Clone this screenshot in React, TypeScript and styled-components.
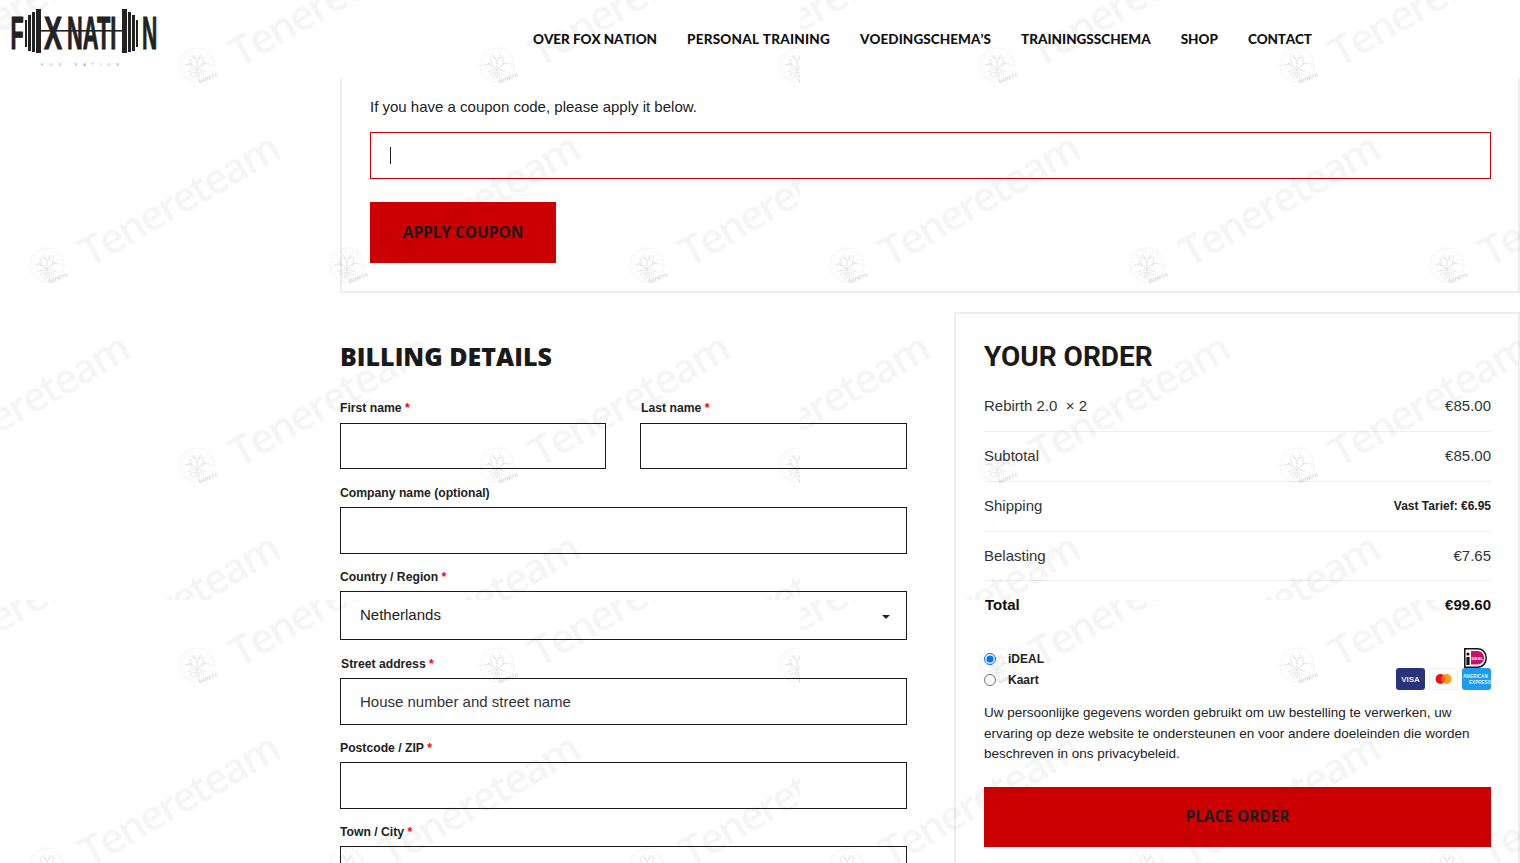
import React from 'react';
import styled, { createGlobalStyle } from 'styled-components';

const GlobalStyle = createGlobalStyle`
  html, body {
    margin: 0;
    padding: 0;
    background: #fff;
    overflow: hidden;
  }
  body {
    font-family: "Liberation Sans", Arial, sans-serif;
    color: #222;
  }
  * {
    box-sizing: border-box;
  }
`;

const Page = styled.div`
  position: relative;
  width: 1520px;
  height: 863px;
  overflow: hidden;
`;

const Header = styled.header`
  display: flex;
  height: 78px;
  align-items: flex-start;
`;

const LogoLink = styled.a`
  display: block;
  width: 533px;
  height: 78px;
  flex: none;
`;

const Nav = styled.nav`
  display: flex;
  gap: 30px;
  padding-top: 31px;
`;

const NavLink = styled.a<{ $track: number }>`
  font-family: Lato, "Open Sans", sans-serif;
  font-weight: 900;
  font-size: 13.5px;
  line-height: 17px;
  font-kerning: none;
  letter-spacing: ${(p) => p.$track}px;
  color: #111;
  text-transform: uppercase;
  white-space: nowrap;
`;

const Main = styled.main`
  padding-left: 340px;
`;

const CouponBox = styled.section`
  height: 215px;
  padding: 20px 27px 0 28px;
  border: 2px solid #eee;
  border-top: none;
`;

const CouponText = styled.p`
  margin: 0 0 16px;
  font-size: 15px;
  line-height: 18px;
  color: #222;
`;

const CouponField = styled.div`
  display: flex;
  align-items: center;
  height: 47px;
  padding-left: 19px;
  border: 1px solid #c00;
`;

const Caret = styled.span`
  display: block;
  width: 1px;
  height: 17px;
  background: #222;
`;

const RedButton = styled.button<{ $wide?: boolean; $tall?: number }>`
  display: block;
  width: ${(p) => (p.$wide ? '100%' : '186px')};
  height: ${(p) => p.$tall ?? 61}px;
  border: none;
  padding: 0 0 2px;
  background: #c00;
  color: #1c1c1c;
  font-family: "Open Sans", sans-serif;
  font-weight: 700;
  font-size: 15.4px;
  text-transform: uppercase;
`;

const CouponButton = styled(RedButton)`
  margin-top: 23px;
  padding: 0;
`;

const Checkout = styled.div`
  display: flex;
  gap: 47px;
  margin-top: 19px;
`;

const Billing = styled.section`
  width: 567px;
  flex: none;
  padding-top: 27px;
`;

const BillingTitle = styled.h3`
  margin: 0;
  font-family: "Open Sans", sans-serif;
  font-weight: 800;
  font-size: 25px;
  line-height: 34px;
  color: #1a1a1a;
  text-transform: uppercase;
`;

const OrderTitle = styled.h3`
  margin: 0;
  font-family: Roboto, sans-serif;
  font-weight: 700;
  font-size: 28px;
  line-height: 34px;
  color: #1a1a1a;
  text-transform: uppercase;
`;

const NameRow = styled.div`
  display: grid;
  grid-template-columns: 266px 267px;
  column-gap: 34px;
  margin-top: 26px;
`;

const Field = styled.div<{ $top?: number }>`
  margin-top: ${(p) => p.$top ?? 14}px;
`;

const Label = styled.label<{ $indent?: number; $gap?: number }>`
  display: block;
  height: 16px;
  margin-left: ${(p) => p.$indent ?? 0}px;
  margin-bottom: ${(p) => p.$gap ?? 7}px;
  font-size: 12.2px;
  line-height: 18px;
  font-weight: 700;
  color: #222;
`;

const Required = styled.span`
  color: #f00;
`;

const TextInput = styled.input<{ $h?: number }>`
  display: block;
  width: 100%;
  height: ${(p) => p.$h ?? 47}px;
  padding: 0 19px;
  border: 1px solid #1a1a1a;
  border-radius: 0;
  background: transparent;
  font-family: "Liberation Sans", Arial, sans-serif;
  font-size: 15px;
  color: #222;
  outline: none;
  &::placeholder {
    color: #333;
    opacity: 1;
  }
`;

const SelectBox = styled.div`
  display: flex;
  align-items: center;
  justify-content: space-between;
  height: 49px;
  padding: 0 16px 2px 19px;
  border: 1px solid #1a1a1a;
  font-size: 15px;
  color: #222;
`;

const SelectArrow = styled.span`
  display: block;
  width: 0;
  height: 0;
  margin-top: 4px;
  border-left: 4px solid transparent;
  border-right: 4px solid transparent;
  border-top: 4px solid #222;
`;

const OrderBox = styled.aside`
  flex: 1;
  height: 600px;
  padding: 26px 27px 0 28px;
  border: 2px solid #eee;
  border-bottom: none;
`;

const OrderRows = styled.div`
  margin-top: 8px;
`;

const OrderRow = styled.div<{ $h?: number; $last?: boolean }>`
  display: flex;
  align-items: center;
  justify-content: space-between;
  height: ${(p) => p.$h ?? 50}px;
  padding-bottom: 2px;
  border-bottom: ${(p) => (p.$last ? 'none' : '1px solid #eee')};
  font-size: 15px;
  color: #333;
`;

const SmallStrong = styled.strong`
  font-size: 12px;
  color: #222;
`;

const TotalCell = styled.strong`
  color: #111;
  font-size: 15px;
  &:first-child {
    margin-left: 1px;
  }
`;

const Payments = styled.div`
  position: relative;
  margin-top: 19px;
`;

const PayOption = styled.label`
  display: flex;
  align-items: center;
  height: 21px;
  font-size: 12px;
  font-weight: 700;
  color: #222;
`;

const Radio = styled.input`
  width: 12px;
  height: 12px;
  margin: 0 12px 0 0;
`;

const PayIcons = styled.div`
  position: absolute;
  right: 0;
  top: 0;
  display: flex;
  flex-direction: column;
  align-items: flex-end;
`;

const IdealWrap = styled.div`
  height: 20px;
  margin-right: 4px;
`;

const CardRow = styled.div`
  display: flex;
  gap: 4px;
`;

const PrivacyText = styled.p`
  margin: 13px 0 0;
  font-size: 13.5px;
  line-height: 20.5px;
  color: #222;
`;

const PlaceOrder = styled(RedButton)`
  margin-top: 22.5px;
`;

const Overlay = styled.svg`
  position: absolute;
  left: 0;
  top: 0;
  pointer-events: none;
`;

const logoPlates = [
  [25, 2, 20, 27],
  [28, 3, 15, 36],
  [32, 3, 12, 40],
  [36, 5, 9, 44],
  [122, 5, 9, 44],
  [128, 3, 12, 40],
  [132, 3, 15, 36],
  [136, 2, 20, 27],
];

// condensed letters: x position and horizontal squeeze of each run
const logoLetters: [string, number, number][] = [
  ['F', 10.5, 0.47],
  ['X', 44, 0.59],
  ['NATI', 67, 0.475],
  ['N', 142, 0.46],
];

const Logo = () => (
  <svg width="170" height="78" viewBox="0 0 170 78" aria-label="Fox Nation">
    <g fill="#222" stroke="#222" strokeWidth="1" fontFamily="Liberation Sans, Arial, sans-serif" fontWeight="700" fontSize="46">
      {logoLetters.map(([t, x, s]) => (
        <text key={t} transform={`translate(${x} 49) scale(${s} 1)`}>{t}</text>
      ))}
    </g>
    <rect x="41" y="30" width="81" height="1.6" fill="#222" />
    {logoPlates.map(([x, w, y, h]) => (
      <rect key={x} x={x} y={y} width={w} height={h} fill="#222" />
    ))}
    <text x="41" y="66" fontFamily="Liberation Sans, Arial, sans-serif" fontSize="4" fill="#999" letterSpacing="6">
      FOX NATION
    </text>
  </svg>
);

const IdealIcon = () => (
  <svg width="23" height="20" viewBox="0 0 23 20" style={{ display: 'block' }}>
    <path d="M.8.8h12.500c5.700 0 8.900 4 8.900 9.200s-3.200 9.200-8.900 9.200H.8z" fill="#fff" stroke="#111" strokeWidth="1.500" />
    <rect x="2.400" y="9" width="3.200" height="8" fill="#111" />
    <circle cx="4" cy="6" r="1.600" fill="#111" />
    <path d="M7 3h6.500c3.800 0 6.500 3 6.500 6.800s-2.700 6.700-6.500 6.700H7z" fill="#cc0f6e" />
    <text x="7.500" y="11.500" fontSize="4.300" fontWeight="700" fill="#fff" fontFamily="Liberation Sans, sans-serif">DEAL</text>
  </svg>
);

const VisaIcon = () => (
  <svg width="29" height="22" viewBox="0 0 29 22">
    <rect width="29" height="22" rx="3" fill="#27337a" />
    <text x="14.500" y="14" textAnchor="middle" fontSize="8" fontWeight="700" fill="#e8e8ee" fontFamily="Liberation Sans, sans-serif">VISA</text>
  </svg>
);

const MasterIcon = () => (
  <svg width="29" height="22" viewBox="0 0 29 22">
    <rect x="0.500" y="0.500" width="28" height="21" rx="3" fill="#fff" stroke="#eee" />
    <circle cx="11.500" cy="11" r="5" fill="#e8141f" />
    <circle cx="17.500" cy="11" r="5" fill="#f79e1b" />
    <path d="M14.500 7a5 5 0 0 1 0 8 5 5 0 0 1 0-8z" fill="#f2601a" />
  </svg>
);

const AmexIcon = () => (
  <svg width="29" height="22" viewBox="0 0 29 22">
    <rect width="29" height="22" rx="3" fill="#1f9bed" />
    <g fontFamily="Liberation Sans, sans-serif" fontWeight="700" fontSize="4.600" fill="#dff1fc">
      <text x="1" y="9.500">AMERICAN</text>
      <text x="7" y="15.500">EXPRESS</text>
    </g>
  </svg>
);

// one faint stamp of the trial watermark: tree seal plus the rotated word
const Stamp = ({ x, y }: { x: number; y: number }) => (
  <g transform={`translate(${x} ${y})`}>
    <use href="#seal" />
    <text
      x="43"
      y="3"
      transform="rotate(-30 43 3)"
      fontFamily="Open Sans, sans-serif"
      fontWeight="600"
      fontSize="41"
      fill="#000"
      fillOpacity="0.038"
      textLength="224"
    >
      Tenereteam
    </text>
  </g>
);

const Watermark = () => (
  <Overlay width="1520" height="863">
    <defs>
      <g id="seal" fill="none" stroke="#000" strokeOpacity="0.11">
        <circle r="17" strokeWidth="1" strokeDasharray="1 1.500" />
        <circle r="14.500" strokeWidth="0.600" strokeDasharray="1 1.500" />
        <path
          d="M0 13V-3M-3 13l2-8M3 13l-2-8M0 4l-9-6M-5 1l-2-8M-6-1l-6 1M0 4l9-7M5 0l2-8M6-2l6 1M0-3l-4-8M0-3l4-8M-9 7l7-3M9 7l-7-3M-2-6l-4-3M2-6l4-3M-7 10l4-3M7 10l-4-3"
          strokeWidth="1.300"
          strokeDasharray="1.500 .8"
        />
        <text
          x="3"
          y="16"
          transform="rotate(-22 10 19)"
          fontSize="7"
          fontWeight="700"
          fontFamily="Liberation Sans, sans-serif"
          fill="#000"
          fillOpacity="0.13"
          stroke="none"
        >
          tenere
        </text>
      </g>
      <pattern id="wm" patternUnits="userSpaceOnUse" width="800" height="600">
        {[65, 465].map((y) =>
          [-103, 197, 497, 797].map((x) => <Stamp key={`${x}-${y}`} x={x} y={y} />)
        )}
        {[265, 665].map((y) =>
          [47, 347, 647].map((x) => <Stamp key={`${x}-${y}`} x={x} y={y} />)
        )}
      </pattern>
    </defs>
    <rect width="1520" height="863" fill="url(#wm)" />
  </Overlay>
);

const navItems: [string, number][] = [
  ['Over Fox Nation', -0.05],
  ['Personal Training', 0.25],
  ['Voedingschema’s', 0.07],
  ['Trainingsschema', 0],
  ['Shop', 0],
  ['Contact', -0.15],
];

const App: React.FC = () => {
  return (
    <Page>
      <GlobalStyle />
      <Header>
        <LogoLink>
          <Logo />
        </LogoLink>
        <Nav>
          {navItems.map(([item, track]) => (
            <NavLink key={item} $track={track}>{item}</NavLink>
          ))}
        </Nav>
      </Header>
      <Main>
        <CouponBox>
          <CouponText>If you have a coupon code, please apply it below.</CouponText>
          <CouponField>
            <Caret />
          </CouponField>
          <CouponButton>Apply coupon</CouponButton>
        </CouponBox>
        <Checkout>
          <Billing>
            <BillingTitle>Billing details</BillingTitle>
            <NameRow>
              <div>
                <Label $gap={8}>First name <Required>*</Required></Label>
                <TextInput $h={46} />
              </div>
              <div>
                <Label $gap={8} $indent={1}>Last name <Required>*</Required></Label>
                <TextInput $h={46} />
              </div>
            </NameRow>
            <Field $top={15}>
              <Label>Company name (optional)</Label>
              <TextInput />
            </Field>
            <Field>
              <Label>Country / Region <Required>*</Required></Label>
              <SelectBox>
                Netherlands
                <SelectArrow />
              </SelectBox>
            </Field>
            <Field $top={15}>
              <Label $indent={1}>Street address <Required>*</Required></Label>
              <TextInput placeholder="House number and street name" />
            </Field>
            <Field>
              <Label>Postcode / ZIP <Required>*</Required></Label>
              <TextInput />
            </Field>
            <Field>
              <Label>Town / City <Required>*</Required></Label>
              <TextInput />
            </Field>
          </Billing>
          <OrderBox>
            <OrderTitle>Your order</OrderTitle>
            <OrderRows>
              <OrderRow>
                <span>Rebirth 2.0&nbsp; × 2</span>
                <span>€85.00</span>
              </OrderRow>
              <OrderRow>
                <span>Subtotal</span>
                <span>€85.00</span>
              </OrderRow>
              <OrderRow>
                <span>Shipping</span>
                <SmallStrong>Vast Tarief: €6.95</SmallStrong>
              </OrderRow>
              <OrderRow $h={49}>
                <span>Belasting</span>
                <span>€7.65</span>
              </OrderRow>
              <OrderRow $h={48} $last>
                <TotalCell>Total</TotalCell>
                <TotalCell>€99.60</TotalCell>
              </OrderRow>
            </OrderRows>
            <Payments>
              <PayOption>
                <Radio type="radio" name="pay" defaultChecked />
                iDEAL
              </PayOption>
              <PayOption>
                <Radio type="radio" name="pay" />
                Kaart
              </PayOption>
              <PayIcons>
                <IdealWrap>
                  <IdealIcon />
                </IdealWrap>
                <CardRow>
                  <VisaIcon />
                  <MasterIcon />
                  <AmexIcon />
                </CardRow>
              </PayIcons>
            </Payments>
            <PrivacyText>
              Uw persoonlijke gegevens worden gebruikt om uw bestelling te verwerken, uw ervaring op deze website te ondersteunen en voor andere doeleinden die worden beschreven in ons privacybeleid.
            </PrivacyText>
            <PlaceOrder $wide $tall={60}>Place order</PlaceOrder>
          </OrderBox>
        </Checkout>
      </Main>
      <Watermark />
    </Page>
  );
};

export default App;
